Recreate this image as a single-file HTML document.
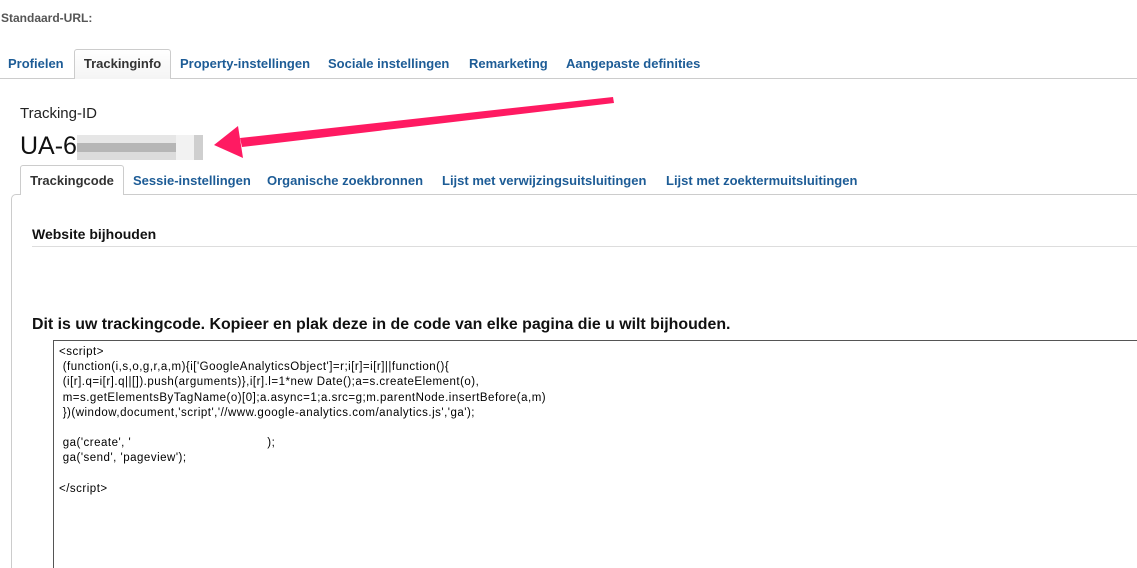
<!DOCTYPE html>
<html><head><meta charset="utf-8"><style>
html,body{margin:0;width:1137px;height:568px;overflow:hidden;background:#fff;font-family:"Liberation Sans",Arial,sans-serif;position:relative}
.a{position:absolute;white-space:nowrap}
.tab{position:absolute;top:50px;height:28px;line-height:28px;font-size:13px;font-weight:bold;color:#1d5c96}
.st{position:absolute;top:166px;height:28px;line-height:29px;font-size:13px;font-weight:bold;color:#1d5c96}
.act{color:#333;border:1px solid #ccc;border-bottom:none;background:linear-gradient(#fff,#f4f4f4);border-radius:3px 3px 0 0;box-sizing:border-box;text-align:center}
.code{font-size:11.5px;letter-spacing:0.5px;color:#000;line-height:15.2px}
.px{position:absolute;width:9px;height:8px}
</style></head><body>
<div class="a" style="left:1px;top:11px;font-size:12px;font-weight:bold;color:#555">Standaard-URL:</div>
<div class="a" style="left:0;top:78px;width:1137px;height:1px;background:#ccc"></div>
<div class="tab" style="left:8px">Profielen</div>
<div class="tab act" style="left:74px;width:97px;height:30px;top:49px">Trackinginfo</div>
<div class="tab" style="left:180px">Property-instellingen</div>
<div class="tab" style="left:328px">Sociale instellingen</div>
<div class="tab" style="left:469px">Remarketing</div>
<div class="tab" style="left:566px">Aangepaste definities</div>

<div class="a" style="left:20px;top:105px;font-size:15px;color:#222">Tracking-ID</div>
<div class="a" style="left:20px;top:132px;font-size:25px;color:#111">UA-6</div>
<div class="a" style="left:77px;top:135px;width:126px;height:8px;background:#e6e6e6"></div>
<div class="a" style="left:77px;top:143px;width:126px;height:9px;background:#b6b6b6"></div>
<div class="a" style="left:77px;top:152px;width:126px;height:8px;background:#dcdcdc"></div>
<div class="a" style="left:176px;top:135px;width:18px;height:25px;background:#f2f2f2"></div>
<div class="a" style="left:194px;top:135px;width:9px;height:25px;background:#cfcfcf"></div>

<svg class="a" style="left:0;top:0" width="1137" height="568">
<polygon points="613,97 614,103 242,147 240,138" fill="#ff1a62"/>
<polygon points="214,145 238,126 243,158" fill="#ff1a62"/>
</svg>

<div class="a" style="left:11px;top:194px;width:1140px;height:400px;border:1px solid #ccc;border-radius:5px 0 0 0"></div>
<div class="st act" style="left:20px;width:104px;height:30px;top:165px;background:#fff">Trackingcode</div>
<div class="st" style="left:133px">Sessie-instellingen</div>
<div class="st" style="left:267px">Organische zoekbronnen</div>
<div class="st" style="left:442px">Lijst met verwijzingsuitsluitingen</div>
<div class="st" style="left:666px">Lijst met zoektermuitsluitingen</div>

<div class="a" style="left:32px;top:226px;font-size:14px;font-weight:bold;color:#111">Website bijhouden</div>
<div class="a" style="left:32px;top:246px;width:1105px;height:1px;background:#ddd"></div>
<div class="a" style="left:32px;top:316px;font-size:15.9px;font-weight:bold;color:#111">Dit is uw trackingcode. Kopieer en plak deze in de code van elke pagina die u wilt bijhouden.</div>
<div class="a" style="left:53px;top:340px;width:1100px;height:240px;border:1px solid #555"></div>
<div class="a code" style="left:59px;top:345px">&lt;script&gt;<br>
&nbsp;(function(i,s,o,g,r,a,m){i['GoogleAnalyticsObject']=r;i[r]=i[r]||function(){<br>
&nbsp;(i[r].q=i[r].q||[]).push(arguments)},i[r].l=1*new Date();a=s.createElement(o),<br>
&nbsp;m=s.getElementsByTagName(o)[0];a.async=1;a.src=g;m.parentNode.insertBefore(a,m)<br>
&nbsp;})(window,document,'script','//www.google-analytics.com/analytics.js','ga');<br><br>
&nbsp;ga('create', '<span style="display:inline-block;width:136px"></span>);<br>
&nbsp;ga('send', 'pageview');<br><br>
&lt;/script&gt;</div>
</body></html>
